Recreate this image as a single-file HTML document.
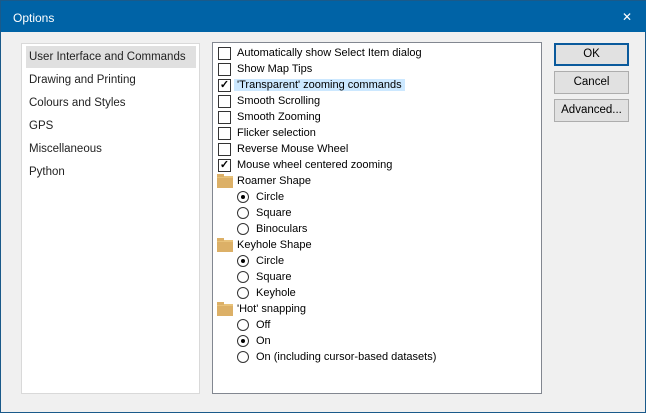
<!DOCTYPE html>
<html><head><style>
*{margin:0;padding:0;box-sizing:border-box}
body{width:646px;height:413px;background:#f0f0f0;font-family:"Liberation Sans",sans-serif;font-size:11px;color:#000;position:relative;overflow:hidden;border:1px solid #1a5a8a}
.title{position:absolute;left:0;top:0;width:646px;height:31px;background:#0063a6;color:#fff;font-size:12px}
.title span{position:absolute;left:12px;top:10px}
.x{position:absolute;right:15px;top:9px;font-size:12px}
.list{position:absolute;left:20px;top:42px;width:179px;height:351px;background:#fff;border:1px solid #d9d9d9}
.li{position:absolute;left:7px;color:#222;font-size:11.5px}
.sel{position:absolute;left:4px;top:2px;width:170px;height:22px;background:#e0e0e0}
.tree{position:absolute;left:211px;top:41px;width:330px;height:352px;background:#fff;border:1px solid #828790}
.row{position:absolute;height:16px;line-height:16px;white-space:nowrap}
.cb{position:absolute;left:5px;width:13px;height:13px;border:1px solid #333;background:#fff;font-size:11px;line-height:11px;text-align:center;font-weight:bold}
.rd{position:absolute;left:24px;width:12px;height:12px;border:1px solid #333;border-radius:50%;background:#fff}
.rd.on:after{content:"";position:absolute;left:3px;top:3px;width:4px;height:4px;border-radius:50%;background:#000}
.fd{position:absolute;left:4px;width:16px;height:12px;background:#dcb067;border-top:2px solid #e8c27a}
.fd:before{content:"";position:absolute;left:0;top:-4px;width:7px;height:3px;background:#dcb067}
.btn{position:absolute;left:553px;width:75px;height:23px;background:#e1e1e1;border:1px solid #adadad;text-align:center;line-height:21px;font-size:11.5px}
</style></head><body>
<div class="title"><span>Options</span><div class="x">✕</div></div>
<div class="list">
<div class="sel"></div>
<div class="li" style="top:7px">User Interface and Commands</div>
<div class="li" style="top:30px">Drawing and Printing</div>
<div class="li" style="top:53px">Colours and Styles</div>
<div class="li" style="top:76px">GPS</div>
<div class="li" style="top:99px">Miscellaneous</div>
<div class="li" style="top:122px">Python</div>
</div>
<div class="tree">
<div class="row" style="top:2px;left:0"><div class="cb" style="top:2px"></div><span style="margin-left:24px">Automatically show Select Item dialog</span></div>
<div class="row" style="top:18px;left:0"><div class="cb" style="top:2px"></div><span style="margin-left:24px">Show Map Tips</span></div>
<div class="row" style="top:34px;left:0"><div class="cb" style="top:2px">✓</div><span style="margin-left:21px;padding:0 3px;background:#cce8ff">'Transparent' zooming commands</span></div>
<div class="row" style="top:50px;left:0"><div class="cb" style="top:2px"></div><span style="margin-left:24px">Smooth Scrolling</span></div>
<div class="row" style="top:66px;left:0"><div class="cb" style="top:2px"></div><span style="margin-left:24px">Smooth Zooming</span></div>
<div class="row" style="top:82px;left:0"><div class="cb" style="top:2px"></div><span style="margin-left:24px">Flicker selection</span></div>
<div class="row" style="top:98px;left:0"><div class="cb" style="top:2px"></div><span style="margin-left:24px">Reverse Mouse Wheel</span></div>
<div class="row" style="top:114px;left:0"><div class="cb" style="top:2px">✓</div><span style="margin-left:24px">Mouse wheel centered zooming</span></div>
<div class="row" style="top:130px;left:0"><div class="fd" style="top:3px"></div><span style="margin-left:24px">Roamer Shape</span></div>
<div class="row" style="top:146px;left:0"><div class="rd on" style="top:2px"></div><span style="margin-left:43px">Circle</span></div>
<div class="row" style="top:162px;left:0"><div class="rd" style="top:2px"></div><span style="margin-left:43px">Square</span></div>
<div class="row" style="top:178px;left:0"><div class="rd" style="top:2px"></div><span style="margin-left:43px">Binoculars</span></div>
<div class="row" style="top:194px;left:0"><div class="fd" style="top:3px"></div><span style="margin-left:24px">Keyhole Shape</span></div>
<div class="row" style="top:210px;left:0"><div class="rd on" style="top:2px"></div><span style="margin-left:43px">Circle</span></div>
<div class="row" style="top:226px;left:0"><div class="rd" style="top:2px"></div><span style="margin-left:43px">Square</span></div>
<div class="row" style="top:242px;left:0"><div class="rd" style="top:2px"></div><span style="margin-left:43px">Keyhole</span></div>
<div class="row" style="top:258px;left:0"><div class="fd" style="top:3px"></div><span style="margin-left:24px">'Hot' snapping</span></div>
<div class="row" style="top:274px;left:0"><div class="rd" style="top:2px"></div><span style="margin-left:43px">Off</span></div>
<div class="row" style="top:290px;left:0"><div class="rd on" style="top:2px"></div><span style="margin-left:43px">On</span></div>
<div class="row" style="top:306px;left:0"><div class="rd" style="top:2px"></div><span style="margin-left:43px">On (including cursor-based datasets)</span></div>
</div>
<div class="btn" style="top:42px;border:2px solid #0a5a9c;line-height:19px">OK</div>
<div class="btn" style="top:70px">Cancel</div>
<div class="btn" style="top:98px">Advanced...</div>
</body></html>
